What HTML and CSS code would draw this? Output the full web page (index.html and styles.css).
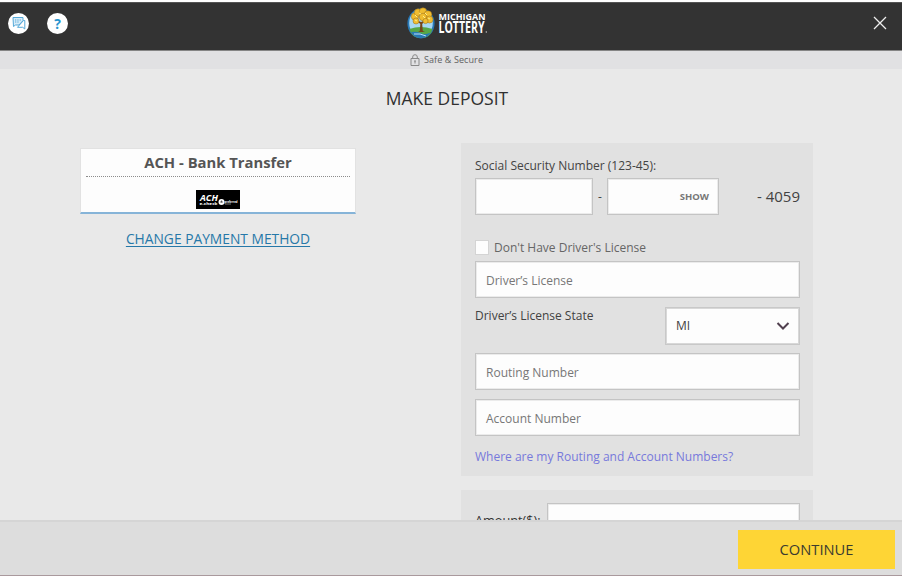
FILE: index.html
```html
<!DOCTYPE html>
<html lang="en">
<head>
<meta charset="utf-8">
<title>Michigan Lottery - Make Deposit</title>
<link rel="stylesheet" href="styles.css">
</head>
<body>
<div class="app">
  <header class="topbar">
    <div class="tools">
      <button class="round" aria-label="Chat">
        <svg width="14" height="14" viewBox="0 0 14 14" fill="none" stroke="#55a9d9" stroke-width="1"><path d="M1 1.500h10v3L7 9H3.500L1.500 10.500Z" fill="#d8ecf8"/><path d="M11.500 4.500h1.300V13L10.700 11.300H5.500L11.500 4.500"/><path d="M3 4h6M3 6h4" stroke-dasharray="1 .7"/></svg>
      </button>
      <button class="round help" aria-label="Help">?</button>
    </div>
    <svg class="logo" width="82" height="34" viewBox="0 0 82 34">
      <ellipse cx="14" cy="16.500" rx="13.600" ry="15" fill="#2878b6"/>
      <ellipse cx="14" cy="16" rx="11.800" ry="13.500" fill="#a9d8f2"/>
      <path d="M2.500 22q11-4 23 0-2 9-11.500 9T2.500 22Z" fill="#57a747"/>
      <path d="M4 25q7-1 10 1.200t9.500-.5Q20 31 14 31 7 31 4 25Z" fill="#2878b6"/>
      <path d="M7 27q6-1 12 2" fill="none" stroke="#b9e2f5"/>
      <path d="M12.800 24 13.300 17 9 13l5 2 5-2-3.800 4 .6 7 2.200 1h-7Z" fill="#75451a"/>
      <g fill="#f0bd30" stroke="#976b19" stroke-width=".5"><circle cx="8" cy="9.500" r="3.700"/><circle cx="11" cy="5.500" r="3.700"/><circle cx="16" cy="4.500" r="3.700"/><circle cx="21" cy="7.500" r="3.800"/><circle cx="22.500" cy="12.500" r="3.500"/><circle cx="16" cy="10" r="3.800"/><circle cx="9" cy="14" r="3"/><circle cx="18.500" cy="14" r="2.600"/></g>
      <path d="M8 8l2 2m2-4 2 1m4-1 2 2m-4 1 2 2m3 0 2 1M8 13l2 1" stroke="#fff08a" stroke-width="1"/>
      <g class="logo-text"><text x="31.500" y="12.500" font-size="9.500" textLength="47" lengthAdjust="spacingAndGlyphs">MICHIGAN</text><text x="31.500" y="25.500" font-size="15.500" textLength="46" lengthAdjust="spacingAndGlyphs">LOTTERY</text></g>
      <circle cx="79.300" cy="25" r=".7" fill="#ccc"/>
    </svg>
    <button class="close" aria-label="Close"><svg width="14" height="14" viewBox="0 0 14 14" stroke="#eee" stroke-width="1.300"><path d="M1 1l12 12M13 1 1 13"/></svg></button>
  </header>
  <div class="secure">
    <svg width="10" height="12" viewBox="0 0 10 12" fill="none" stroke="#898989"><path d="M1 4.500h8v7H1ZM2.700 4.500V3q0-2.300 2.300-2.300T7.300 3v1.500M4 7h2M5 7v2.500"/></svg>
    <span>Safe &amp; Secure</span>
  </div>
  <main>
    <h1><span>MAKE DEPOSIT</span></h1>
    <div class="columns">
      <section class="method">
        <div class="card">
          <h2>ACH - Bank Transfer</h2>
          <svg class="ach" width="44" height="19" viewBox="0 0 44 19"><rect width="44" height="19"/><g fill="#fff"><text x="4" y="10.500" font-size="9" font-weight="700" font-style="italic" textLength="18" lengthAdjust="spacingAndGlyphs">ACH</text><text x="3.500" y="14.500" font-size="4" font-weight="700" textLength="18" lengthAdjust="spacingAndGlyphs">e-check</text><circle cx="25.500" cy="12" r="3"/><text x="28.500" y="12.500" font-size="3.800" font-weight="700" textLength="13" lengthAdjust="spacingAndGlyphs">preferred</text><path d="M29 14h6" stroke="#aaa" stroke-width=".7"/></g><path d="M24 12h3M25.500 10.500v2" stroke="#111" stroke-width=".6"/></svg>
        </div>
        <a class="change" href="#">CHANGE PAYMENT METHOD</a>
      </section>
      <section class="forms">
        <form class="panel">
          <div class="ssn-label"><span>Social Security Number (123-45):</span></div>
          <div class="ssn">
            <div class="field first"></div><span class="dash">-</span>
            <div class="field second"><span>SHOW</span></div><span class="last4">- 4059</span>
          </div>
          <label class="check"><i></i><span>Don't Have Driver's License</span></label>
          <div class="field"><span>Driver’s License</span></div>
          <div class="state"><span class="state-label">Driver’s License State</span>
            <div class="select"><span>MI</span><svg width="14" height="10" viewBox="0 0 14 10" fill="none" stroke="#51404f" stroke-width="2"><path d="M1.500 2 7 7.500 12.500 2"/></svg></div>
          </div>
          <div class="field routing"><span>Routing Number</span></div>
          <div class="field account"><span>Account Number</span></div>
          <a class="where" href="#">Where are my Routing and Account Numbers?</a>
        </form>
        <div class="panel amount"><span>Amount($):</span><div class="field"></div></div>
      </section>
    </div>
  </main>
  <footer><button class="continue">CONTINUE</button></footer>
</div>
</body>
</html>
```
FILE: styles.css
```css
* { box-sizing: border-box; }
body { margin: 0; background: #fff; font-family: "Open Sans", sans-serif; font-size: 12px; color: #424242; overflow: hidden; }
button { border: 0; padding: 0; font: inherit; background: none; }
svg { display: block; flex: none; }
h1, h2 { margin: 0; font-weight: 400; }
.app { width: 902px; height: 574px; margin-top: 2px; display: flex; flex-direction: column; background: #e9e9e9; border-bottom: 1px solid #a9999d; }
.topbar { height: 49px; flex: none; display: grid; grid-template-columns: 1fr 82px 1fr; align-items: center; background: #333; border-top: 1px solid #555; border-bottom: 1px solid #858585; padding: 0 15px 7px 8px; }
.tools { display: flex; gap: 18px; }
.round { width: 21px; height: 21px; border-radius: 50%; background: #fff; display: grid; place-items: center; }
.help { color: #2795cf; font-weight: 700; font-size: 14px; line-height: 21px; }
.logo { margin-top: 2px; }
.logo-text { fill: #fff; font-family: "Open Sans", sans-serif; font-weight: 700; }
.close { justify-self: end; }
.secure { height: 18px; flex: none; display: flex; align-items: center; justify-content: center; gap: 4px; padding: 0 9px 1px 0; background: #e1e1e3; font-size: 9px; letter-spacing: .1px; color: #626262; }
main { flex: 1; min-height: 0; overflow: hidden; padding-top: 18px; }
h1 { height: 24px; line-height: 23px; font-size: 17.5px; text-align: center; padding-right: 8px; color: #303030; }
.columns { display: flex; margin-top: 32px; padding-left: 80px; gap: 105px; }
.method { width: 276px; padding-top: 5px; text-align: center; }
.card { height: 66px; padding: 0 5px; background: #fdfdfd; border: 1px solid #e2e2e2; border-bottom: 2px solid #86b4d8; }
h2 { height: 28px; line-height: 27px; font-size: 14.8px; font-weight: 700; color: #555; border-bottom: 1px dotted #8c8c8c; }
.ach { margin: 13px auto 0; }
.change { display: inline-block; line-height: 20px; margin-top: 15px; font-size: 13.8px; color: #2678a8; text-underline-offset: 2px; }
.forms { width: 352px; }
.panel { height: 333px; padding: 14px 13px 0 14px; background: #e1e1e1; }
.ssn-label { line-height: 18px; height: 21px; color: #444; }
.ssn { display: flex; align-items: center; }
.field { height: 37px; display: flex; align-items: center; background: #fdfdfd; border: 1px solid #c4c4c4; box-shadow: inset 0 0 0 1px #ebebeb; padding: 1px 10px 0; color: #777; }
.first { width: 118px; }
.dash { width: 14px; text-align: center; }
.second { width: 112px; justify-content: flex-end; padding: 0 9px 0 0; font-size: 9.5px; font-weight: 700; }
.last4 { margin-left: auto; font-size: 15px; line-height: 20px; padding-bottom: 1px; }
.check { height: 46px; padding-top: 18px; display: flex; align-items: center; gap: 5px; color: #666; }
.check i { width: 14px; height: 15px; background: #fdfdfd; border: 1px solid #d4d4d4; }
.state { display: flex; justify-content: space-between; padding-top: 9px; }
.state-label { line-height: 18px; color: #424242; }
.select { width: 135px; height: 38px; background: #fdfdfd; border: 1px solid #c8c8c8; box-shadow: inset 0 0 0 1px #d8d8d8; display: flex; justify-content: space-between; align-items: center; padding: 0 9px 2px 10px; }
.select svg { margin-top: 2px; }
.routing { margin-top: 8px; }
.account { margin-top: 9px; }
.where { display: inline-block; line-height: 18px; margin-top: 12px; color: #7779dc; text-decoration: none; }
.amount { height: 100px; margin-top: 14px; padding-top: 13px; display: flex; justify-content: space-between; }
.amount > span { line-height: 35px; font-size: 12.7px; color: #333; }
.amount .field { width: 253px; }
footer { height: 55px; flex: none; background: #ddd; border-top: 2px solid #d5d5d5; padding: 8px 7px 0 0; display: flex; justify-content: flex-end; }
.continue { width: 157px; height: 39px; background: #fed535; font-size: 14.7px; padding-bottom: 2px; color: #3b3b30; }
```
